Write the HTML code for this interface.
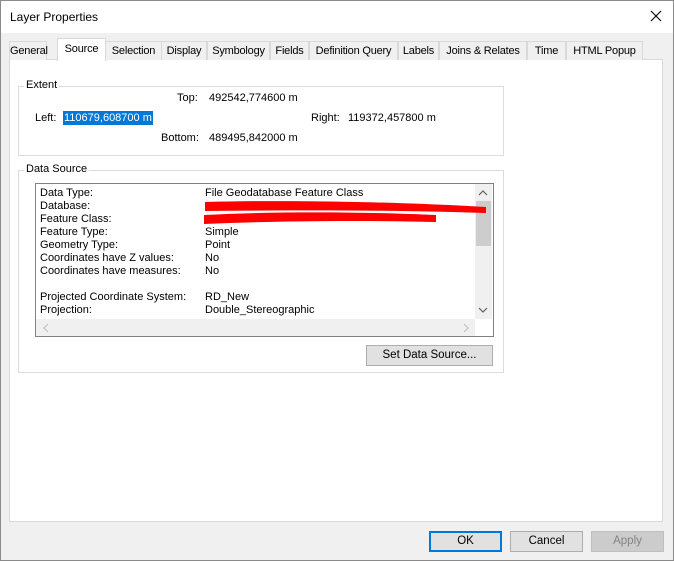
<!DOCTYPE html>
<html><head><style>
*{margin:0;padding:0;box-sizing:border-box}
body{width:674px;height:561px;background:#f0f0f0;font-family:"Liberation Sans",sans-serif;font-size:11px;color:#000;position:relative;overflow:hidden}
.a{position:absolute;white-space:nowrap}
.win{position:absolute;left:0;top:0;width:674px;height:561px;border:1px solid #8a8a8a}
.title{position:absolute;left:1px;top:1px;width:672px;height:32px;background:#fff}
.tab{position:absolute;top:41px;height:19px;border:1px solid #d9d9d9;border-bottom:none;background:#f0f0f0;text-align:center;line-height:18px;font-size:11px;letter-spacing:-0.2px}
.panel{position:absolute;left:9px;top:59px;width:654px;height:463px;background:#fff;border:1px solid #d9d9d9}
.grp{position:absolute;border:1px solid #dcdcdc}
.lbl{position:absolute;background:#fff;padding:0 2px}
.btn{position:absolute;height:21px;background:#e1e1e1;border:1px solid #adadad;text-align:center;line-height:19px;font-size:11.5px}
</style></head><body>
<div class="win"></div>
<div class="title"></div>
<div class="a" style="left:10px;top:10px;font-size:12px">Layer Properties</div>
<svg class="a" style="left:650px;top:10px" width="12" height="12"><path d="M1 1L11 11M11 1L1 11" stroke="#000" stroke-width="1.1"/></svg>
<div class="panel"></div>
<div class="tab" style="left:9px;width:38px">General</div>
<div class="tab" style="left:105px;width:57px">Selection</div>
<div class="tab" style="left:161px;width:46px">Display</div>
<div class="tab" style="left:207px;width:63px">Symbology</div>
<div class="tab" style="left:270px;width:39px">Fields</div>
<div class="tab" style="left:309px;width:89px">Definition Query</div>
<div class="tab" style="left:398px;width:41px">Labels</div>
<div class="tab" style="left:439px;width:88px">Joins &amp; Relates</div>
<div class="tab" style="left:527px;width:39px">Time</div>
<div class="tab" style="left:566px;width:77px">HTML Popup</div>
<div class="tab" style="left:57px;top:38px;width:49px;height:23px;background:#fff;line-height:21px">Source</div>

<div class="grp" style="left:18px;top:86px;width:486px;height:70px"></div>
<div class="lbl" style="left:24px;top:79px">Extent</div>
<div class="a" style="left:177px;top:92px">Top:</div>
<div class="a" style="left:209px;top:92px">492542,774600 m</div>
<div class="a" style="left:35px;top:112px">Left:</div>
<div class="a" style="left:63px;top:111px;background:#0078d7;color:#fff;padding:0 1px;height:14px;line-height:14px">110679,608700 m</div>
<div class="a" style="left:311px;top:112px">Right:</div>
<div class="a" style="left:348px;top:112px">119372,457800 m</div>
<div class="a" style="left:161px;top:132px">Bottom:</div>
<div class="a" style="left:209px;top:132px">489495,842000 m</div>

<div class="grp" style="left:18px;top:170px;width:486px;height:203px"></div>
<div class="lbl" style="left:24px;top:163px">Data Source</div>
<div class="a" style="left:35px;top:183px;width:459px;height:154px;border:1px solid #828282;background:#fff"></div>
<div class="a" style="left:475px;top:184px;width:17px;height:135px;background:#f0f0f0"></div>
<div class="a" style="left:476px;top:201px;width:15px;height:45px;background:#cdcdcd"></div>
<div class="a" style="left:36px;top:319px;width:439px;height:17px;background:#f0f0f0"></div>
<svg class="a" style="left:478px;top:189px" width="10" height="8"><path d="M1 6L5 2L9 6" fill="none" stroke="#606060" stroke-width="1.2"/></svg>
<svg class="a" style="left:478px;top:306px" width="10" height="8"><path d="M1 2L5 6L9 2" fill="none" stroke="#606060" stroke-width="1.2"/></svg>
<svg class="a" style="left:42px;top:323px" width="8" height="10"><path d="M6 1L2 5L6 9" fill="none" stroke="#c0c0c0" stroke-width="1.2"/></svg>
<svg class="a" style="left:462px;top:323px" width="8" height="10"><path d="M2 1L6 5L2 9" fill="none" stroke="#c0c0c0" stroke-width="1.2"/></svg>
<div class="a" style="left:40px;top:187px;line-height:13px">Data Type:<br>Database:<br>Feature Class:<br>Feature Type:<br>Geometry Type:<br>Coordinates have Z values:<br>Coordinates have measures:<br><br>Projected Coordinate System:<br>Projection:</div>
<div class="a" style="left:205px;top:187px;line-height:13px">File Geodatabase Feature Class<br>&nbsp;<br>&nbsp;<br>Simple<br>Point<br>No<br>No<br><br>RD_New<br>Double_Stereographic</div>
<svg class="a" style="left:200px;top:198px" width="290" height="30"><path d="M5 4C80 2 180 3 286 9L286 15C200 12 100 12 5 13Z" fill="#f00"/><path d="M4 17C80 13 170 14 236 17L236 24C150 22 80 23 4 26Z" fill="#f00"/></svg>

<div class="btn" style="left:366px;top:345px;width:127px">Set Data Source...</div>
<div class="btn" style="left:429px;top:531px;width:73px;border:2px solid #0078d7;line-height:17px">OK</div>
<div class="btn" style="left:510px;top:531px;width:73px">Cancel</div>
<div class="btn" style="left:591px;top:531px;width:73px;background:#cccccc;border-color:#bfbfbf;color:#838383">Apply</div>
</body></html>
